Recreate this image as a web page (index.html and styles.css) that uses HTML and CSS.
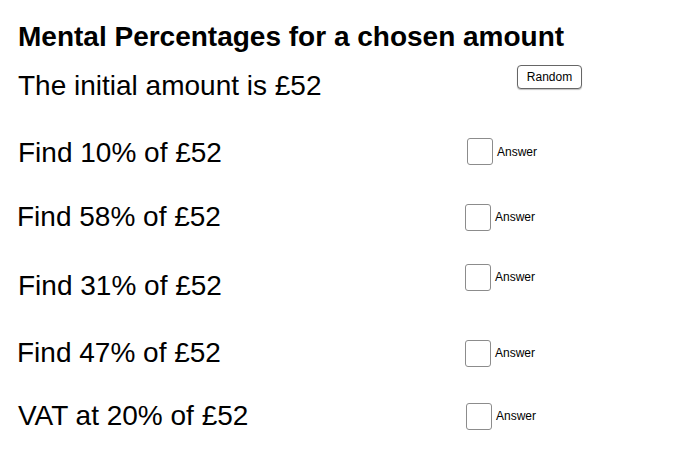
FILE: index.html
```html
<!DOCTYPE html>
<html lang="en">
<head>
    <meta charset="UTF-8">
    <meta name="viewport" content="width=device-width, initial-scale=1.0">
    <title>Mental Percentages for a chosen amount</title>
    <link rel="stylesheet" href="styles.css">
</head>
<body>
    <div class="applet">
        <h1 class="title">Mental Percentages for a chosen amount</h1>
        <div class="intro">
            <p class="intro-text">The initial amount is £52</p>
            <button class="random">Random</button>
        </div>
        <ul class="questions">
            <li class="question q1">
                <span class="prompt">Find 10% of £52</span>
                <label class="answer"><span class="box"></span>Answer</label>
            </li>
            <li class="question q2">
                <span class="prompt">Find 58% of £52</span>
                <label class="answer"><span class="box"></span>Answer</label>
            </li>
            <li class="question q3">
                <span class="prompt">Find 31% of £52</span>
                <label class="answer"><span class="box"></span>Answer</label>
            </li>
            <li class="question q4">
                <span class="prompt">Find 47% of £52</span>
                <label class="answer"><span class="box"></span>Answer</label>
            </li>
            <li class="question q5">
                <span class="prompt">VAT at 20% of £52</span>
                <label class="answer"><span class="box"></span>Answer</label>
            </li>
        </ul>
    </div>
</body>
</html>
```

FILE: styles.css
```css
body {
    margin: 0;
    padding: 0;
    background-color: #fff;
    color: #000;
    font-family: "Liberation Sans", Arial, sans-serif;
}
.applet {
    width: 683px;
    height: 466px;
    padding: 21px 0 0 18px;
    box-sizing: border-box;
}
.title {
    margin: 0;
    font-size: 28px;
    font-weight: bold;
    line-height: 32px;
}
.intro {
    display: flex;
    align-items: center;
    margin-top: 17px;
    height: 32px;
}
.intro-text {
    margin: 0;
    width: 499px;
    font-size: 28px;
    line-height: 32px;
}
.random {
    width: 65px;
    height: 24px;
    margin-bottom: 18px;
    padding: 0;
    font-family: "Liberation Sans", Arial, sans-serif;
    font-size: 12px;
    color: #000;
    background-color: #fff;
    border: 1px solid #666;
    border-radius: 4px;
    box-shadow: 0 1px 1px rgba(0,0,0,0.25);
}
.questions {
    list-style-type: none;
    margin: 0;
    padding: 0;
}
.question {
    display: flex;
    align-items: center;
    height: 32px;
}
.q1 { margin-top: 35px; }
.q2 { margin-top: 32px; }
.q3 { margin-top: 37px; }
.q4 { margin-top: 35px; }
.q5 { margin-top: 31px; }
.prompt {
    width: 449px;
    font-size: 28px;
    line-height: 32px;
}
.q2 .prompt, .q4 .prompt {
    margin-left: -1px;
    width: 449px;
}
.answer {
    display: flex;
    align-items: center;
    gap: 4px;
    font-size: 12px;
    margin-bottom: 3px;
}
.q2 .answer, .q4 .answer, .q5 .answer {
    margin-left: -1px;
    margin-bottom: 0;
}
.q3 .answer {
    margin-left: -2px;
    margin-bottom: 18px;
}
.box {
    width: 24px;
    height: 25px;
    border: 1px solid #8c8c8c;
    border-radius: 3px;
    background-color: #fff;
}
```
